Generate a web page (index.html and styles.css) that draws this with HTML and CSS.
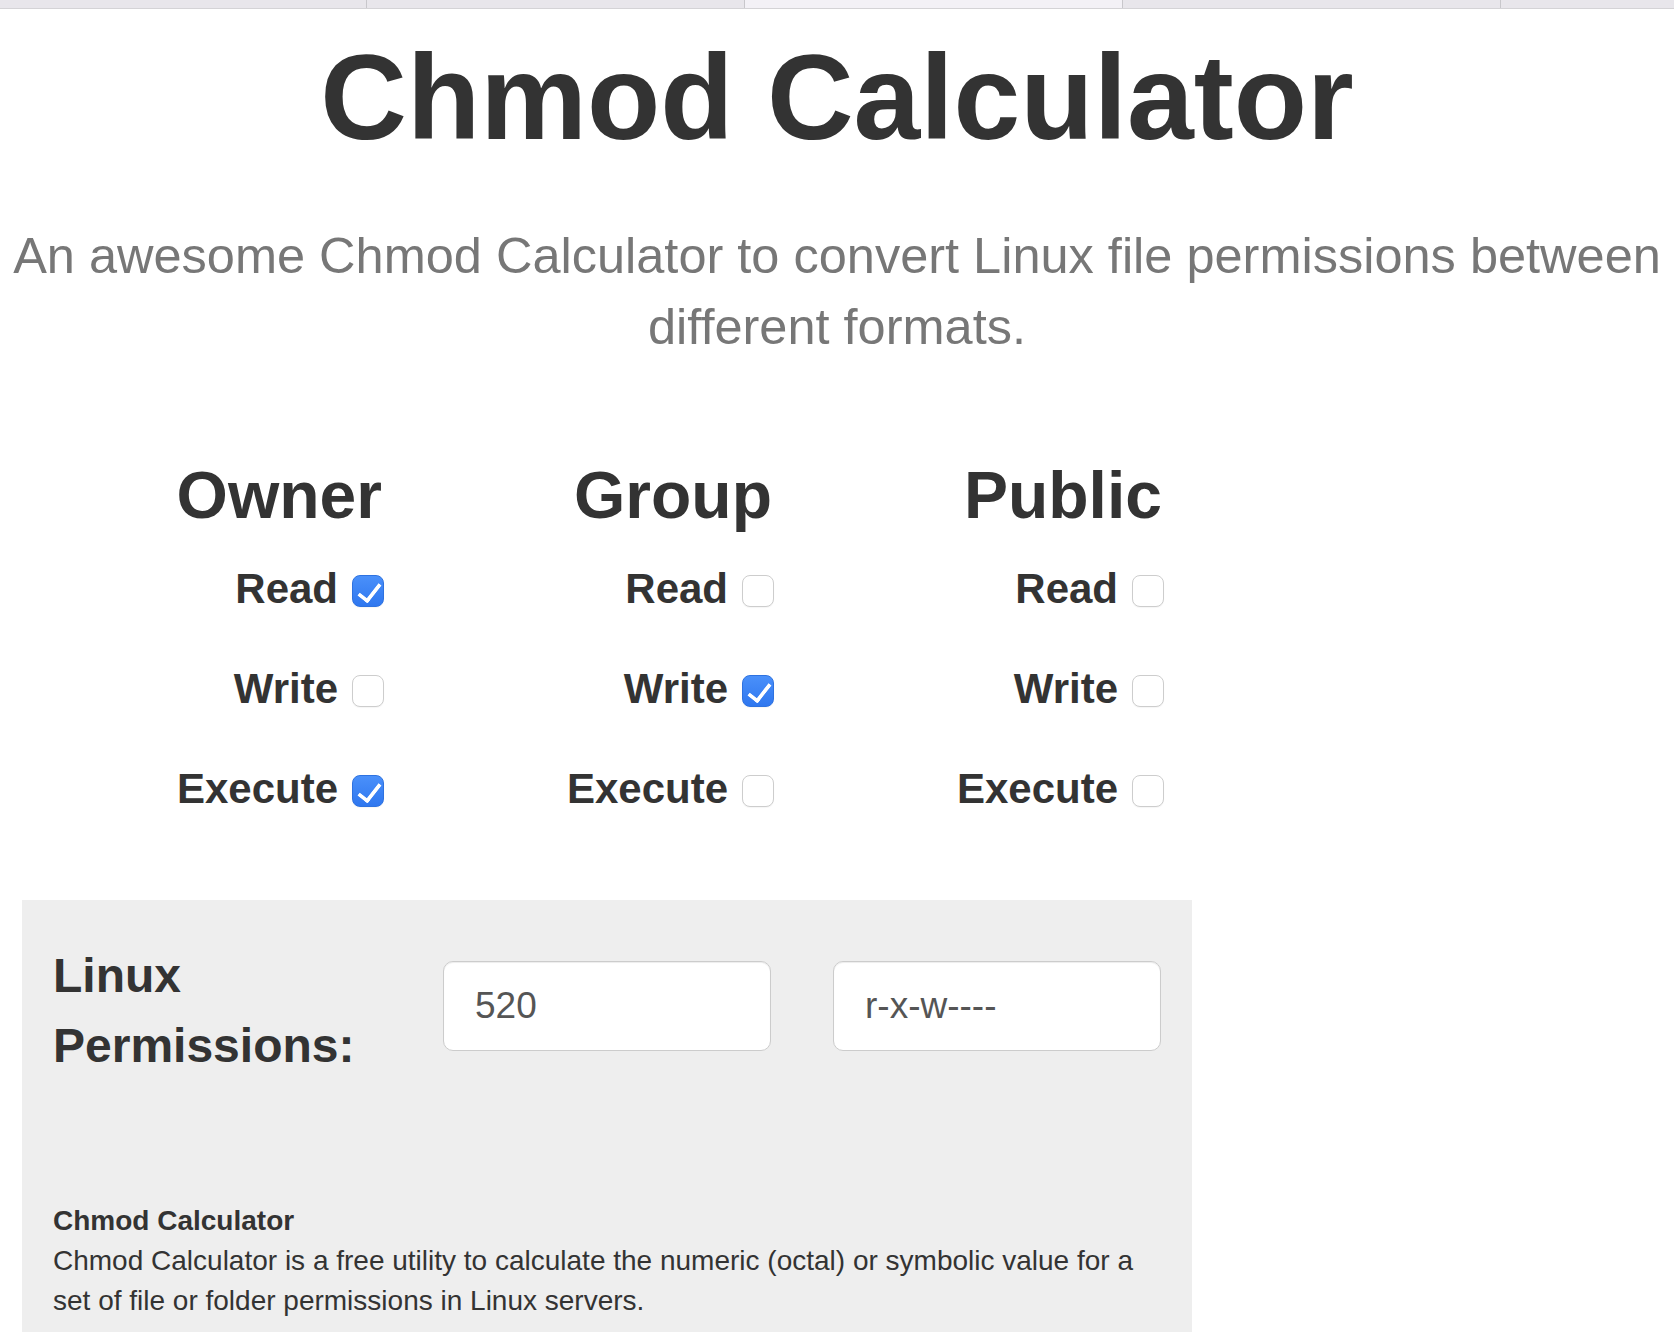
FILE: index.html
```html
<!DOCTYPE html>
<html lang="en">
<head>
  <meta charset="UTF-8">
  <title>Chmod Calculator</title>
  <link rel="stylesheet" href="styles.css">
</head>
<body>

  <div class="tabbar">
    <div class="tab tab-first"></div>
    <div class="tab"></div>
    <div class="tab active"></div>
    <div class="tab"></div>
    <div class="tab tab-last"></div>
  </div>

  <header class="hero">
    <h1>Chmod Calculator</h1>
    <p class="lead">An awesome Chmod Calculator to convert Linux file permissions between different formats.</p>
  </header>

  <div class="container">
    <div class="perm-grid">
      <div class="perm-col">
        <h2>Owner</h2>
        <label class="perm-row">Read <input type="checkbox" data-who="0" data-bit="4" checked></label>
        <label class="perm-row">Write <input type="checkbox" data-who="0" data-bit="2"></label>
        <label class="perm-row">Execute <input type="checkbox" data-who="0" data-bit="1" checked></label>
      </div>
      <div class="perm-col">
        <h2>Group</h2>
        <label class="perm-row">Read <input type="checkbox" data-who="1" data-bit="4"></label>
        <label class="perm-row">Write <input type="checkbox" data-who="1" data-bit="2" checked></label>
        <label class="perm-row">Execute <input type="checkbox" data-who="1" data-bit="1"></label>
      </div>
      <div class="perm-col">
        <h2>Public</h2>
        <label class="perm-row">Read <input type="checkbox" data-who="2" data-bit="4"></label>
        <label class="perm-row">Write <input type="checkbox" data-who="2" data-bit="2"></label>
        <label class="perm-row">Execute <input type="checkbox" data-who="2" data-bit="1"></label>
      </div>
    </div>

    <div class="result-panel">
      <div class="result-row">
        <h3 class="result-label">Linux Permissions:</h3>
        <div class="result-field"><input type="text" id="octal" value="520"></div>
        <div class="result-field"><input type="text" id="symbolic" value="r-x-w----"></div>
      </div>

      <div class="about">
        <strong>Chmod Calculator</strong>
        <p>Chmod Calculator is a free utility to calculate the numeric (octal) or symbolic value for a set of file or folder permissions in Linux servers.</p>
      </div>
    </div>
  </div>

  <script>
    const boxes = document.querySelectorAll('.perm-row input');

    function update() {
      const nums = [0, 0, 0];
      boxes.forEach(b => {
        if (b.checked) nums[b.dataset.who] += Number(b.dataset.bit);
      });
      // symbolic form, rwx for each of owner / group / public
      const sym = nums.map(n =>
        (n & 4 ? 'r' : '-') + (n & 2 ? 'w' : '-') + (n & 1 ? 'x' : '-')
      ).join('');
      document.getElementById('octal').value = nums.join('');
      document.getElementById('symbolic').value = sym;
    }

    boxes.forEach(b => b.addEventListener('change', update));
    update();
  </script>

</body>
</html>
```

FILE: styles.css
```css
:root {
  --text:   #333333;
  --muted:  #777777;
  --panel:  #eeeeee;
  --border: #cccccc;
  --blue:   #3482f6;
}

* { box-sizing: border-box; }

body {
  margin: 0;
  background: #ffffff;
  color: var(--text);
  font-family: "Liberation Sans", Arial, Helvetica, sans-serif;
}

/* browser tab strip cut off at the top */
.tabbar {
  display: flex;
  height: 9px;
  background: #e8e6eb;
  border-bottom: 1px solid #d4d3d6;
}
.tab {
  width: 378px;
  border-right: 1px solid #c8c7cb;
}
.tab-first { width: 367px; }
.tab-last { flex: 1; border-right: none; }
.tab.active { background: #f3f1f6; }

.hero {
  text-align: center;
  padding: 0 8px;
}
.hero h1 {
  margin: 28px 0 63px;
  font-size: 120px;
  line-height: 120px;
  font-weight: bold;
  color: var(--text);
}
.lead {
  margin: 0;
  font-size: 50.5px;
  line-height: 71px;
  color: var(--muted);
}

.container {
  width: 1170px;
  margin: 100px 0 0 22px;
}

/* ── checkbox grid ───────────────────────────────────────────── */
.perm-grid {
  display: grid;
  grid-template-columns: repeat(3, 1fr);
}
.perm-col {
  padding-right: 28px;
  text-align: right;
}
.perm-col h2 {
  margin: 0 2px 11px 0;
  font-size: 66px;
  line-height: 66px;
  font-weight: bold;
}
.perm-row {
  display: flex;
  justify-content: flex-end;
  align-items: center;
  gap: 14px;
  height: 100px;
  font-size: 42px;
  line-height: 42px;
  font-weight: bold;
  cursor: pointer;
}

.perm-row input {
  appearance: none;
  -webkit-appearance: none;
  position: relative;
  width: 32px;
  height: 32px;
  margin: 3px 0 0;
  background: #ffffff;
  border: 1px solid #cdcdcd;
  border-radius: 8px;
  box-shadow: 0 1px 1px rgba(0,0,0,0.04);
  cursor: pointer;
}
.perm-row input:checked {
  background: linear-gradient(#4a90fa, #2f77ef);
  border-color: #2e72e0;
}
.perm-row input:checked::before {
  content: "";
  position: absolute;
  left: 10px;
  top: 3px;
  width: 9px;
  height: 19px;
  border-right: 4px solid #ffffff;
  border-bottom: 4px solid #ffffff;
  border-radius: 0 0 2px 0;
  transform: rotate(38deg);
}
.perm-row input:focus { outline: none; }

/* ── result panel ────────────────────────────────────────────── */
.result-panel {
  margin-top: 61px;
  padding: 41px 0 40px;
  background: var(--panel);
}
.result-row {
  display: grid;
  grid-template-columns: repeat(3, 1fr);
}
.result-label {
  margin: 0;
  padding: 0 31px;
  font-size: 48px;
  line-height: 70px;
  font-weight: bold;
}
.result-field {
  padding: 20px 31px 0;
}
.result-field input {
  width: 100%;
  height: 90px;
  padding: 0 31px;
  font-family: inherit;
  font-size: 37px;
  color: #555555;
  background: #ffffff;
  border: 1px solid var(--border);
  border-radius: 10px;
  box-shadow: inset 0 1px 1px rgba(0,0,0,0.075);
}
.result-field input:focus {
  outline: none;
  border-color: #66afe9;
}

.about {
  margin-top: 119px;
  padding: 0 31px;
  font-size: 28px;
  line-height: 40px;
}
.about strong {
  display: block;
  line-height: 41px;
}
.about p {
  margin: 0;
}
```
